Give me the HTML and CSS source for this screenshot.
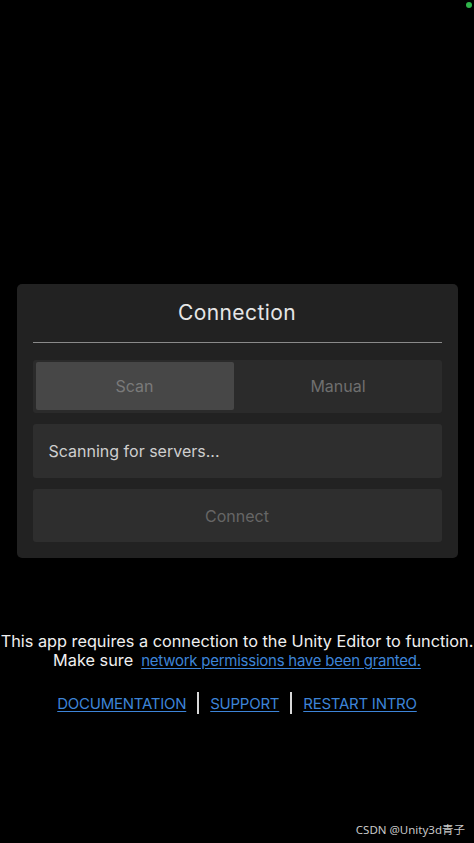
FILE: index.html
```html
<!DOCTYPE html>
<html>
<head>
<meta charset="utf-8">
<link rel="stylesheet" href="styles.css">
</head>
<body>
<div class="screen">
  <span class="dot"></span>
  <div class="panel">
    <div class="title">Connection</div>
    <div class="divider"></div>
    <div class="tabs">
      <div class="tab active">Scan</div>
      <div class="tab">Manual</div>
    </div>
    <div class="status">Scanning for servers...</div>
    <div class="connect">Connect</div>
  </div>
  <div class="info">
    <p class="line">This app requires a connection to the Unity Editor to function.</p>
    <p class="line">Make sure<a class="link inline">network permissions have been granted.</a></p>
  </div>
  <div class="links">
    <a class="link">DOCUMENTATION</a>
    <span class="sep"></span>
    <a class="link">SUPPORT</a>
    <span class="sep"></span>
    <a class="link">RESTART INTRO</a>
  </div>
  <div class="watermark">CSDN @Unity3d青子</div>
</div>
</body>
</html>
```
FILE: styles.css
```css
html, body {
  margin: 0;
  padding: 0;
  background: #000;
}
.screen {
  position: relative;
  width: 474px;
  height: 843px;
  background: #000;
  font-family: Inter, "Noto Sans", "Noto Sans CJK SC", sans-serif;
  display: flex;
  flex-direction: column;
  align-items: center;
  overflow: hidden;
}
.dot {
  position: absolute;
  top: 2px;
  right: 2px;
  width: 6px;
  height: 6px;
  border-radius: 50%;
  background: #2fb34a;
}
.panel {
  margin-top: 284px;
  width: 409px;
  padding: 14px 16px 16px;
  background: #222222;
  border-radius: 5px;
  display: flex;
  flex-direction: column;
}
.title {
  text-align: center;
  color: #e6e6e6;
  font-size: 21px;
  letter-spacing: 0.4px;
  line-height: 30px;
  height: 30px;
}
.divider {
  margin-top: 14px;
  height: 1px;
  background: #8a8a8a;
}
.tabs {
  margin-top: 17px;
  height: 53px;
  background: #2b2b2b;
  border-radius: 3px;
  display: flex;
  padding: 2px 3px 3px;
  box-sizing: border-box;
}
.tab {
  flex: 1;
  display: flex;
  align-items: center;
  justify-content: center;
  color: #6f6f6f;
  font-size: 16px;
  border-radius: 2px;
  padding-left: 4px;
}
.tab.active {
  background: #474747;
  color: #7a7a7a;
  flex: 0 0 198px;
  padding-left: 0;
}
.status {
  margin-top: 11px;
  height: 54px;
  background: #2e2e2e;
  border-radius: 3px;
  display: flex;
  align-items: center;
  padding-left: 16px;
  color: #cfcfcf;
  font-size: 16px;
}
.connect {
  margin-top: 11px;
  height: 53px;
  background: #2e2e2e;
  border-radius: 3px;
  display: flex;
  align-items: center;
  justify-content: center;
  color: #666;
  font-size: 16px;
}
.info {
  margin-top: 73px;
  text-align: center;
  color: #f0f0f0;
  font-size: 16.3px;
  line-height: 20px;
}
.line {
  margin: 0;
  white-space: nowrap;
}
.line + .line {
  margin-top: -1px;
}
.link {
  color: #3d84d8;
  text-decoration: underline;
  text-underline-offset: 2px;
  font-size: 15px;
  letter-spacing: -0.25px;
}
.link.inline {
  margin-left: 8px;
}
.links {
  margin-top: 21px;
  display: flex;
  align-items: center;
  gap: 11px;
}
.sep {
  width: 2px;
  height: 22px;
  background: #d8d8d8;
}
.watermark {
  position: absolute;
  right: 9px;
  bottom: 6px;
  color: #c8c8c8;
  font-size: 11.5px;
  font-family: "Noto Sans", "Noto Sans CJK SC", sans-serif;
}
```
